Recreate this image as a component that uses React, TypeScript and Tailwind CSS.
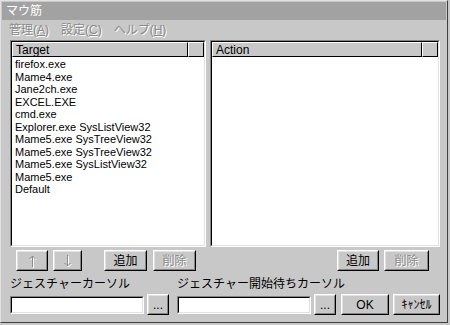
import React from 'react';

const targets = [
  'firefox.exe',
  'Mame4.exe',
  'Jane2ch.exe',
  'EXCEL.EXE',
  'cmd.exe',
  'Explorer.exe SysListView32',
  'Mame5.exe SysTreeView32',
  'Mame5.exe SysTreeView32',
  'Mame5.exe SysListView32',
  'Mame5.exe',
  'Default',
];

const font = "font-['Liberation_Sans','Noto_Sans_CJK_JP',sans-serif]";

// raised 3D button, win classic
const Btn: React.FC<{ w: string; h?: string; disabled?: boolean; children: React.ReactNode }> = ({ w, h = 'h-[21px]', disabled, children }) => (
  <div className={`${w} ${h} border border-t-white border-l-white border-b-black border-r-black`}>
    <div className={`h-full w-full flex items-center justify-center whitespace-nowrap border border-t-[#e2e2e2] border-l-[#e2e2e2] border-b-[#848484] border-r-[#848484] text-[12px] ${disabled ? 'text-[#8a8a8a] [text-shadow:1px_1px_0_#fff]' : 'text-black'}`}>
      {children}
    </div>
  </div>
);

const Sunken: React.FC<{ className: string; children?: React.ReactNode }> = ({ className, children }) => (
  <div className={`${className} border border-t-[#848484] border-l-[#848484] border-b-white border-r-white`}>
    <div className="h-full w-full border border-t-black border-l-black border-b-[#e2e2e2] border-r-[#e2e2e2] bg-white flex flex-col">
      {children}
    </div>
  </div>
);

const Header: React.FC<{ label: string; first: string }> = ({ label, first }) => (
  <div className="flex h-[15px] shrink-0">
    <div className={`${first} h-full border border-t-white border-l-white border-b-black border-r-black bg-[#c8c8c8] text-[12px] leading-[12px] pl-[3px] pt-[1px]`}>
      {label}
    </div>
    <div className="flex-1 h-full border border-t-white border-l-white border-b-black border-r-black bg-[#c8c8c8]" />
  </div>
);

// thin arrow glyph like the old system font
const Arrow: React.FC<{ down?: boolean }> = ({ down }) => (
  <svg width="7" height="12" viewBox="0 0 7 12" className="[filter:drop-shadow(1px_1px_0_#fff)]">
    {down ? (
      <path d="M3.5 0V11M0.5 8L3.5 11L6.5 8" stroke="#8a8a8a" fill="none" />
    ) : (
      <path d="M3.5 12V1M0.5 4L3.5 1L6.5 4" stroke="#8a8a8a" fill="none" />
    )}
  </svg>
);

export default function App() {
  return (
    <div className={`w-[450px] h-[325px] bg-[#c8c8c8] ${font} text-black overflow-hidden`}>
      <div className="w-[448px] h-[323px] border border-t-[#e2e2e2] border-l-[#e2e2e2] border-b-[#404040] border-r-[#404040] flex flex-col">
        {/* title */}
        <div className="mx-[1px] mt-[1px] h-[18px] bg-[#a2a2a2] text-white text-[12px] leading-[18px] pl-[4px]">マウ筋</div>
        {/* menu */}
        <div className="flex h-[19px] items-center text-[12px] text-[#8a8a8a] [text-shadow:1px_1px_0_#fff] pl-[8px] gap-[12px]">
          <span>管理(<span className="underline">A</span>)</span>
          <span>設定(<span className="underline">C</span>)</span>
          <span>ヘルプ(<span className="underline">H</span>)</span>
        </div>
        {/* lists */}
        <div className="flex mt-[1px] pl-[9px] gap-[4px]">
          <Sunken className="w-[196px] h-[207px]">
            <Header label="Target" first="w-[176px]" />
            <div className="pl-[3px] pt-[1px] text-[11px] leading-[12.5px]">
              {targets.map((t, i) => (
                <div key={i}>{t}</div>
              ))}
            </div>
          </Sunken>
          <Sunken className="w-[230px] h-[207px]">
            <Header label="Action" first="w-[210px]" />
          </Sunken>
        </div>
        {/* buttons */}
        <div className="flex mt-[3px] h-[21px]">
          <div className="flex pl-[15px] gap-[5px]">
            <Btn w="w-[32px]" disabled><Arrow /></Btn>
            <Btn w="w-[29px]" disabled><Arrow down /></Btn>
          </div>
          <div className="flex ml-[22px] gap-[6px]">
            <Btn w="w-[43px]">追加</Btn>
            <Btn w="w-[43px]" disabled>削除</Btn>
          </div>
          <div className="flex ml-auto mr-[18px] gap-[5px]">
            <Btn w="w-[42px]">追加</Btn>
            <Btn w="w-[45px]" disabled>削除</Btn>
          </div>
        </div>
        {/* cursors */}
        <div className="flex mt-[4px] text-[12px]">
          <div className="pl-[9px] w-[176px]">
            <div className="h-[18px] leading-[18px]">ジェスチャーカーソル</div>
            <div className="flex items-center gap-[3px] mt-[1px]">
              <Sunken className="w-[134px] h-[18px]" />
              <Btn w="w-[22px]">...</Btn>
            </div>
          </div>
          <div className="flex-1">
            <div className="h-[18px] leading-[18px]">ジェスチャー開始待ちカーソル</div>
            <div className="flex items-center mt-[1px]">
              <Sunken className="w-[134px] h-[18px]" />
              <div className="ml-[3px]"><Btn w="w-[22px]">...</Btn></div>
              <div className="ml-[5px]"><Btn w="w-[48px]">OK</Btn></div>
              <div className="ml-[4px]"><Btn w="w-[47px]">ｷｬﾝｾﾙ</Btn></div>
            </div>
          </div>
        </div>
      </div>
    </div>
  );
}
